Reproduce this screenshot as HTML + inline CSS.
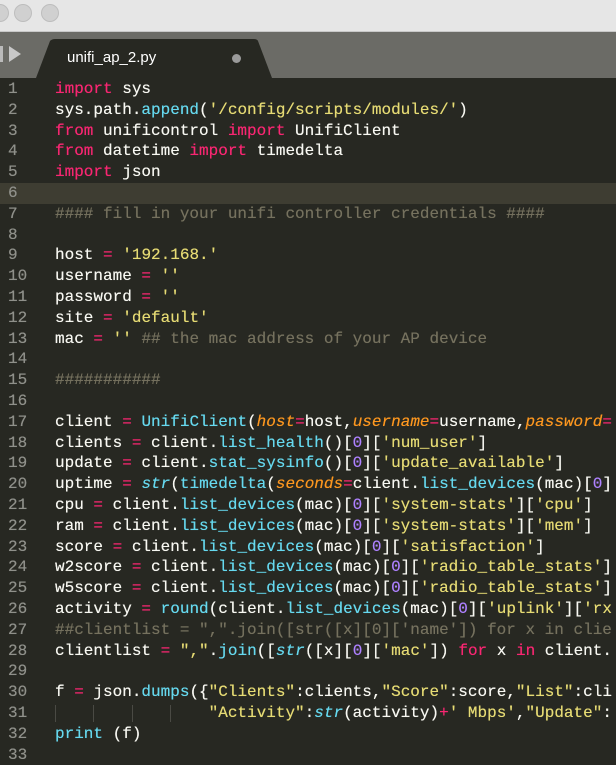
<!DOCTYPE html>
<html><head><meta charset="utf-8"><style>
body{margin:0;width:616px;height:750px;overflow:hidden;background:#272822;position:relative;font-family:"Liberation Sans",sans-serif}
.title{position:absolute;left:0;top:0;width:616px;height:31px;background:#e6e6e6;border-bottom:1px solid #c8c8c8}
.c{position:absolute;top:4px;width:16px;height:16px;border-radius:50%;background:#d0d0d0;border:1px solid #bdbdbd}
.tabbar{position:absolute;left:0;top:32px;width:616px;height:46px;background:#6b6b66}
.code{position:absolute;left:0;top:79px;width:616px;font-family:"Liberation Mono",monospace;font-size:16px;text-shadow:0 0 0.4px currentColor}
.l{height:20.8px;line-height:20.8px;white-space:pre;color:#f8f8f2;position:relative}
.n{display:inline-block;width:55px;color:#8f908a;padding-left:8px;box-sizing:border-box}
.k{color:#f92672}.f{color:#66d9ef}.s{color:#e6db74}.d{color:#ae81ff}.p{color:#fd971f;font-style:italic}.i{color:#66d9ef;font-style:italic}.m{color:#75715e}
.hl{background:#3e3d32}
.g{position:absolute;top:2px;height:17px;border-left:1px solid #4a4a44}
</style></head><body>
<div class="title"><div class="c" style="left:-9px"></div><div class="c" style="left:14px"></div><div class="c" style="left:41px"></div></div>
<div class="tabbar">
<div style="position:absolute;left:0;top:14px;width:3px;height:16px;background:#bbb"></div>
<div style="position:absolute;left:9px;top:14px;width:0;height:0;border-top:8px solid transparent;border-bottom:8px solid transparent;border-left:12px solid #c8c8c8"></div>
<svg style="position:absolute;left:0;top:0" width="616" height="46"><path d="M36 46 L50 9 Q52 7 55 7 L254 7 Q257 7 258 9 L272 46 Z" fill="#272822"/></svg>
<div style="position:absolute;left:67px;top:17px;color:#fff;font-size:15px">unifi_ap_2.py</div>
<div style="position:absolute;left:232px;top:22px;width:9px;height:9px;border-radius:50%;background:#9a9a9a"></div>
</div>
<div class="code">
<div class="l"><span class="n">1</span><span class="k">import</span> sys</div>
<div class="l"><span class="n">2</span>sys.path.<span class="f">append</span>(<span class="s">'/config/scripts/modules/'</span>)</div>
<div class="l"><span class="n">3</span><span class="k">from</span> unificontrol <span class="k">import</span> UnifiClient</div>
<div class="l"><span class="n">4</span><span class="k">from</span> datetime <span class="k">import</span> timedelta</div>
<div class="l"><span class="n">5</span><span class="k">import</span> json</div>
<div class="l hl"><span class="n">6</span></div>
<div class="l"><span class="n">7</span><span class="m">#### fill in your unifi controller credentials ####</span></div>
<div class="l"><span class="n">8</span></div>
<div class="l"><span class="n">9</span>host <span class="k">=</span> <span class="s">'192.168.'</span></div>
<div class="l"><span class="n">10</span>username <span class="k">=</span> <span class="s">''</span></div>
<div class="l"><span class="n">11</span>password <span class="k">=</span> <span class="s">''</span></div>
<div class="l"><span class="n">12</span>site <span class="k">=</span> <span class="s">'default'</span></div>
<div class="l"><span class="n">13</span>mac <span class="k">=</span> <span class="s">''</span> <span class="m">## the mac address of your AP device</span></div>
<div class="l"><span class="n">14</span></div>
<div class="l"><span class="n">15</span><span class="m">###########</span></div>
<div class="l"><span class="n">16</span></div>
<div class="l"><span class="n">17</span>client <span class="k">=</span> <span class="f">UnifiClient</span>(<span class="p">host</span><span class="k">=</span>host,<span class="p">username</span><span class="k">=</span>username,<span class="p">password</span><span class="k">=</span></div>
<div class="l"><span class="n">18</span>clients <span class="k">=</span> client.<span class="f">list_health</span>()[<span class="d">0</span>][<span class="s">'num_user'</span>]</div>
<div class="l"><span class="n">19</span>update <span class="k">=</span> client.<span class="f">stat_sysinfo</span>()[<span class="d">0</span>][<span class="s">'update_available'</span>]</div>
<div class="l"><span class="n">20</span>uptime <span class="k">=</span> <span class="i">str</span>(<span class="f">timedelta</span>(<span class="p">seconds</span><span class="k">=</span>client.<span class="f">list_devices</span>(mac)[<span class="d">0</span>]</div>
<div class="l"><span class="n">21</span>cpu <span class="k">=</span> client.<span class="f">list_devices</span>(mac)[<span class="d">0</span>][<span class="s">'system-stats'</span>][<span class="s">'cpu'</span>]</div>
<div class="l"><span class="n">22</span>ram <span class="k">=</span> client.<span class="f">list_devices</span>(mac)[<span class="d">0</span>][<span class="s">'system-stats'</span>][<span class="s">'mem'</span>]</div>
<div class="l"><span class="n">23</span>score <span class="k">=</span> client.<span class="f">list_devices</span>(mac)[<span class="d">0</span>][<span class="s">'satisfaction'</span>]</div>
<div class="l"><span class="n">24</span>w2score <span class="k">=</span> client.<span class="f">list_devices</span>(mac)[<span class="d">0</span>][<span class="s">'radio_table_stats'</span>]</div>
<div class="l"><span class="n">25</span>w5score <span class="k">=</span> client.<span class="f">list_devices</span>(mac)[<span class="d">0</span>][<span class="s">'radio_table_stats'</span>]</div>
<div class="l"><span class="n">26</span>activity <span class="k">=</span> <span class="f">round</span>(client.<span class="f">list_devices</span>(mac)[<span class="d">0</span>][<span class="s">'uplink'</span>][<span class="s">'rx</span></div>
<div class="l"><span class="n">27</span><span class="m">##clientlist = ",".join([str([x][0]['name']) for x in clie</span></div>
<div class="l"><span class="n">28</span>clientlist <span class="k">=</span> <span class="s">","</span>.<span class="f">join</span>([<span class="i">str</span>([x][<span class="d">0</span>][<span class="s">'mac'</span>]) <span class="k">for</span> x <span class="k">in</span> client.</div>
<div class="l"><span class="n">29</span></div>
<div class="l"><span class="n">30</span>f <span class="k">=</span> json.<span class="f">dumps</span>({<span class="s">"Clients"</span>:clients,<span class="s">"Score"</span>:score,<span class="s">"List"</span>:cli</div>
<div class="l"><span class="n">31</span>                <span class="s">"Activity"</span>:<span class="i">str</span>(activity)<span class="k">+</span><span class="s">' Mbps'</span>,<span class="s">"Update"</span>:<div class="g" style="left:55px"></div><div class="g" style="left:93px"></div><div class="g" style="left:132px"></div><div class="g" style="left:170px"></div></div>
<div class="l"><span class="n">32</span><span class="f">print</span> (f)</div>
<div class="l"><span class="n">33</span></div>
</div>
</body></html>
